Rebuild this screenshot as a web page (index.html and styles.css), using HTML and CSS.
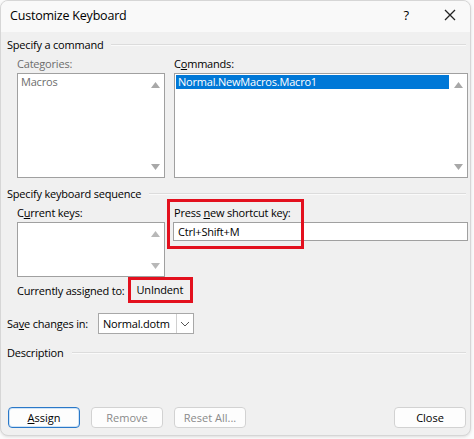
FILE: index.html
```html
<!DOCTYPE html>
<html>
<head>
<meta charset="utf-8">
<link rel="stylesheet" href="styles.css">
</head>
<body>
<div class="dialog">
  <div class="titlebar">
    <span class="title">Customize Keyboard</span>
    <span class="help">?</span>
    <svg class="close-x" width="12" height="12" viewBox="0 0 12 12"><path d="M1 1 L11 11 M11 1 L1 11" stroke="#222" stroke-width="1.3" fill="none"/></svg>
  </div>
  <div class="content">
    <div class="group-head"><span>Specify a command</span><div class="rule"></div></div>
    <div class="cols cmd-cols">
      <div class="col">
        <div class="label gray">Categories:</div>
        <div class="listbox tall">
          <div class="items"><div class="item gray">Macros</div></div>
          <div class="scroll">
            <svg width="9" height="6" viewBox="0 0 9 6"><path d="M0 6 L4.5 0 L9 6 Z" fill="#a8a8a8"/></svg>
            <svg width="9" height="6" viewBox="0 0 9 6"><path d="M0 0 L4.5 6 L9 0 Z" fill="#a8a8a8"/></svg>
          </div>
        </div>
      </div>
      <div class="col">
        <div class="label">C<u>o</u>mmands:</div>
        <div class="listbox tall">
          <div class="items"><div class="item selected">Normal.NewMacros.Macro1</div></div>
          <div class="scroll">
            <svg width="9" height="6" viewBox="0 0 9 6"><path d="M0 6 L4.5 0 L9 6 Z" fill="#a8a8a8"/></svg>
            <svg width="9" height="6" viewBox="0 0 9 6"><path d="M0 0 L4.5 6 L9 0 Z" fill="#a8a8a8"/></svg>
          </div>
        </div>
      </div>
    </div>

    <div class="group-head seq"><span>Specify keyboard sequence</span><div class="rule"></div></div>
    <div class="cols key-cols">
      <div class="col">
        <div class="label">C<u>u</u>rrent keys:</div>
        <div class="listbox short">
          <div class="items"></div>
          <div class="scroll">
            <svg width="9" height="6" viewBox="0 0 9 6"><path d="M0 6 L4.5 0 L9 6 Z" fill="#b8b8b8"/></svg>
            <svg width="9" height="6" viewBox="0 0 9 6"><path d="M0 0 L4.5 6 L9 0 Z" fill="#b8b8b8"/></svg>
          </div>
        </div>
      </div>
      <div class="col press">
        <div class="label">Press <u>n</u>ew shortcut key:</div>
        <div class="textbox">Ctrl+Shift+M</div>
        <div class="redbox"></div>
      </div>
    </div>

    <div class="assigned">
      <span>Currently assigned to:</span>
      <span class="assigned-val">UnIndent</span>
    </div>

    <div class="save-row">
      <span>Sa<u>v</u>e changes in:</span>
      <div class="select">
        <span class="select-text">Normal.dotm</span>
        <span class="select-btn"><svg width="10" height="6" viewBox="0 0 10 6"><path d="M1 1 L5 5 L9 1" stroke="#555" stroke-width="1" fill="none"/></svg></span>
      </div>
    </div>

    <div class="group-head desc"><span>Description</span><div class="rule"></div></div>

    <div class="buttons">
      <button class="btn default"><u>A</u>ssign</button>
      <button class="btn disabled">Remove</button>
      <button class="btn disabled">Reset All...</button>
      <div class="spacer"></div>
      <button class="btn">Close</button>
    </div>
  </div>
</div>
</body>
</html>
```

FILE: styles.css
```css
* { box-sizing: border-box; }
html, body { margin: 0; padding: 0; }
body {
  background: #fbfbfb;
  font-family: "Segoe UI", "Open Sans", "Noto Sans", sans-serif;
  font-size: 11px;
  letter-spacing: -0.2px;
  color: #000;
  width: 474px;
  height: 439px;
  overflow: hidden;
}
u { text-decoration: underline; text-underline-offset: 1px; }
.dialog {
  width: 471px;
  height: 436px;
  border: 1px solid #d6d6d6;
  border-radius: 8px;
  background: #f0f0f0;
  overflow: hidden;
  display: flex;
  flex-direction: column;
  box-shadow: 0 1px 3px rgba(0,0,0,0.12);
}
.titlebar {
  height: 31px;
  flex: none;
  background: #f9f9f9;
  display: flex;
  align-items: center;
  padding-left: 9px;
  padding-bottom: 3px;
}
.title { font-size: 12.5px; flex: 1; }
.help { font-size: 13px; margin-right: 35px; }
.close-x { margin-right: 14px; }
.content {
  flex: 1;
  display: flex;
  flex-direction: column;
  padding: 5px 4px 7px 6px;
}
.group-head {
  display: flex;
  align-items: center;
  height: 14px;
}
.group-head span { margin-right: 8px; }
.rule {
  flex: 1;
  border-top: 1px solid #dcdcdc;
  border-bottom: 1px solid #fafafa;
  height: 0;
  margin-top: 2px;
}
.cols {
  display: grid;
  grid-template-columns: 148px 294px;
  column-gap: 9px;
  padding-left: 10px;
}
.cmd-cols { margin-top: 6px; }
.label { height: 14px; line-height: 14px; margin-bottom: 2px; }
.gray { color: #6d6d6d; }
.listbox {
  background: #fff;
  border: 1px solid #a0a0a0;
  display: flex;
}
.listbox.tall { height: 105px; }
.listbox.short { height: 55px; }
.items { flex: 1; padding: 1px 1px; }
.item { height: 14px; line-height: 14px; padding-left: 2px; }
.item.selected { background: #0078d7; color: #fff; }
.scroll {
  width: 17px;
  display: flex;
  flex-direction: column;
  justify-content: space-between;
  align-items: center;
  padding: 8px 0 7px;
}
.seq { margin-top: 8px; }
.key-cols { margin-top: 6px; }
.press { position: relative; }
.textbox {
  background: #fff;
  border: 1px solid #a0a0a0;
  height: 19px;
  line-height: 17px;
  padding-left: 4px;
  margin-left: -1px;
}
.redbox {
  position: absolute;
  left: -7px;
  top: -7px;
  width: 137px;
  height: 50px;
  border: 3px solid #e3101e;
}
.assigned {
  display: flex;
  align-items: center;
  margin-top: 0;
  padding-left: 10px;
  height: 26px;
}
.assigned-val {
  margin-left: 3px;
  border: 3px solid #e3101e;
  height: 26px;
  line-height: 20px;
  padding: 0 7px 0 6px;
}
.save-row {
  display: flex;
  align-items: center;
  margin-top: 10px;
  height: 21px;
}
.select {
  margin-left: 10px;
  width: 96px;
  height: 21px;
  border: 1px solid #a8a8a8;
  background: #fff;
  display: flex;
}
.select-text { flex: 1; padding-left: 4px; line-height: 19px; }
.select-btn {
  width: 17px;
  border-left: 1px solid #d0d0d0;
  display: flex;
  align-items: center;
  justify-content: center;
}
.desc { margin-top: 11px; }
.buttons {
  margin-top: auto;
  display: flex;
  gap: 11px;
  padding-left: 1px;
}
.spacer { flex: 1; }
.btn {
  font: inherit;
  width: 72px;
  height: 21px;
  background: #fdfdfd;
  border: 1px solid #d2d2d2;
  border-radius: 4px;
  color: #000;
  padding: 0;
}
.btn.default { border-color: #2a78c8; box-shadow: inset 0 0 0 1px #cfe3f6; }
.btn.disabled { color: #8a8a8a; }
```
